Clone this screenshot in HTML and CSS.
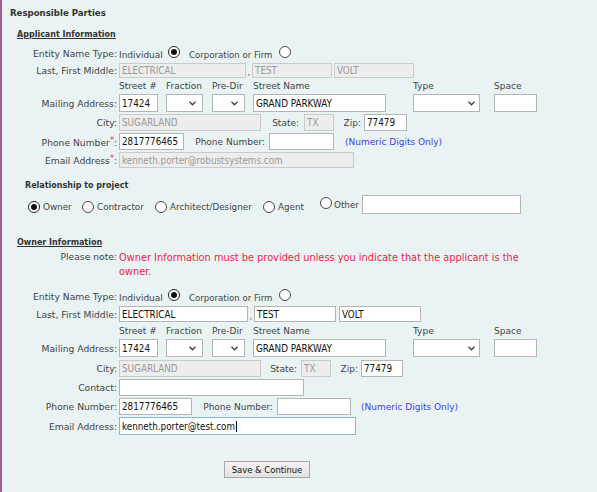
FILE: index.html
```html
<!DOCTYPE html>
<html lang="en">
<head>
<meta charset="utf-8">
<title>Responsible Parties</title>
<link rel="stylesheet" href="styles.css">
</head>
<body>
<div class="page">
  <div class="title">Responsible Parties</div>

  <div class="heading h-app">Applicant Information</div>

  <div class="row r-entity">
    <span class="lbl">Entity Name Type:</span>
    <span class="opt opt-ind">Individual</span><span class="radio on ent-r"></span>
    <span class="opt opt-corp">Corporation or Firm</span><span class="radio ent-r"></span>
  </div>

  <div class="row r-name-a">
    <span class="lbl">Last, First Middle:</span>
    <input class="inp w-last-a" disabled value="ELECTRICAL"><span class="comma">,</span><input class="inp w-first-a" disabled value="TEST"><input class="inp w-mid-a" disabled value="VOLT">
  </div>

  <div class="row r-sub">
    <span class="lbl"></span>
    <span class="col c-num">Street #</span>
    <span class="col c-frac">Fraction</span>
    <span class="col c-pre">Pre-Dir</span>
    <span class="col c-street">Street Name</span>
    <span class="col c-type">Type</span>
    <span class="col c-space">Space</span>
  </div>

  <div class="row r-mail">
    <span class="lbl">Mailing Address:</span>
    <input class="inp c-num" value="17424">
    <span class="sel c-frac"><svg class="chev" width="7" height="5" viewBox="0 0 7 5"><polyline points="0.5,0.8 3.5,3.8 6.5,0.8" fill="none" stroke="#444" stroke-width="1.4"/></svg></span>
    <span class="sel c-pre"><svg class="chev" width="7" height="5" viewBox="0 0 7 5"><polyline points="0.5,0.8 3.5,3.8 6.5,0.8" fill="none" stroke="#444" stroke-width="1.4"/></svg></span>
    <input class="inp c-street" value="GRAND PARKWAY">
    <span class="sel c-type sel-type"><svg class="chev" width="7" height="5" viewBox="0 0 7 5"><polyline points="0.5,0.8 3.5,3.8 6.5,0.8" fill="none" stroke="#444" stroke-width="1.4"/></svg></span>
    <input class="inp c-space" value="">
  </div>

  <div class="row r-city-a">
    <span class="lbl">City:</span>
    <input class="inp w-city" disabled value="SUGARLAND">
    <span class="inl state-a">State:</span>
    <input class="inp w-state" disabled value="TX">
    <span class="inl zip-a">Zip:</span>
    <input class="inp w-zip-a" value="77479">
  </div>

  <div class="row r-phone-a">
    <span class="lbl">Phone Number<span class="req">*</span>:</span>
    <input class="inp w-ph-a" value="2817776465">
    <span class="inl ph-lbl">Phone Number:</span>
    <input class="inp w-ph-a" value="">
    <span class="hint hint-a">(Numeric Digits Only)</span>
  </div>

  <div class="row r-email-a">
    <span class="lbl">Email Address<span class="req">*</span>:</span>
    <input class="inp w-email-a" disabled value="kenneth.porter@robustsystems.com">
  </div>

  <div class="heading h-rel">Relationship to project</div>

  <div class="row r-rel">
    <span class="rel-opt g-owner"><span class="radio on"></span><span class="rel-t">Owner</span></span>
    <span class="rel-opt g-contr"><span class="radio"></span><span class="rel-t">Contractor</span></span>
    <span class="rel-opt g-arch"><span class="radio"></span><span class="rel-t">Architect/Designer</span></span>
    <span class="rel-opt g-agent"><span class="radio"></span><span class="rel-t">Agent</span></span>
    <span class="rel-opt g-other"><span class="radio other-r"></span><span class="rel-t other-t">Other</span></span>
    <input class="inp w-other" value="">
  </div>

  <div class="heading h-own">Owner Information</div>

  <div class="row r-note">
    <span class="lbl">Please note:</span>
    <span class="note">Owner Information must be provided unless you indicate that the applicant is the owner.</span>
  </div>

  <div class="row r-entity-o">
    <span class="lbl">Entity Name Type:</span>
    <span class="opt opt-ind">Individual</span><span class="radio on ent-r"></span>
    <span class="opt opt-corp">Corporation or Firm</span><span class="radio ent-r"></span>
  </div>

  <div class="row r-name-o">
    <span class="lbl">Last, First Middle:</span>
    <input class="inp w-last-o" value="ELECTRICAL"><span class="comma">,</span><input class="inp w-first-o" value="TEST"><input class="inp w-mid-o" value="VOLT">
  </div>

  <div class="row r-sub r-sub-o">
    <span class="lbl"></span>
    <span class="col c-num">Street #</span>
    <span class="col c-frac">Fraction</span>
    <span class="col c-pre">Pre-Dir</span>
    <span class="col c-street">Street Name</span>
    <span class="col c-type">Type</span>
    <span class="col c-space">Space</span>
  </div>

  <div class="row r-mail">
    <span class="lbl">Mailing Address:</span>
    <input class="inp c-num" value="17424">
    <span class="sel c-frac"><svg class="chev" width="7" height="5" viewBox="0 0 7 5"><polyline points="0.5,0.8 3.5,3.8 6.5,0.8" fill="none" stroke="#444" stroke-width="1.4"/></svg></span>
    <span class="sel c-pre"><svg class="chev" width="7" height="5" viewBox="0 0 7 5"><polyline points="0.5,0.8 3.5,3.8 6.5,0.8" fill="none" stroke="#444" stroke-width="1.4"/></svg></span>
    <input class="inp c-street" value="GRAND PARKWAY">
    <span class="sel c-type sel-type"><svg class="chev" width="7" height="5" viewBox="0 0 7 5"><polyline points="0.5,0.8 3.5,3.8 6.5,0.8" fill="none" stroke="#444" stroke-width="1.4"/></svg></span>
    <input class="inp c-space" value="">
  </div>

  <div class="row r-city-o">
    <span class="lbl">City:</span>
    <input class="inp w-city" disabled value="SUGARLAND">
    <span class="inl state-o">State:</span>
    <input class="inp w-state" disabled value="TX">
    <span class="inl zip-o">Zip:</span>
    <input class="inp w-zip-o" value="77479">
  </div>

  <div class="row r-contact">
    <span class="lbl">Contact:</span>
    <input class="inp w-contact" value="">
  </div>

  <div class="row r-phone-o">
    <span class="lbl">Phone Number:</span>
    <input class="inp w-ph-o" value="2817776465">
    <span class="inl ph-lbl">Phone Number:</span>
    <input class="inp w-ph-o2" value="">
    <span class="hint hint-o">(Numeric Digits Only)</span>
  </div>

  <div class="row r-email-o">
    <span class="lbl">Email Address:</span>
    <span class="inp w-email-o focus">kenneth.porter@test.com<span class="caret"></span></span>
  </div>

  <div class="actions">
    <button class="btn" type="button">Save &amp; Continue</button>
  </div>
</div>
</body>
</html>
```

FILE: styles.css
```css
* { box-sizing: border-box; }
html, body { margin: 0; padding: 0; }
body {
  background: #e9f3f4;
  font-family: "DejaVu Sans", Verdana, sans-serif;
  font-size: 9px;
  color: #444;
}
.page {
  border-left: 2px solid #9d5f95;
  min-height: 492px;
  padding-top: 7px;
}
.title {
  font-weight: bold;
  font-size: 8.6px;
  line-height: 12px;
  color: #333;
  padding-left: 8px;
}
.heading {
  font-weight: bold;
  font-size: 8px;
  line-height: 12px;
  color: #333;
  padding-left: 15px;
  text-decoration: underline;
}
.h-app { margin-top: 10px; }
.h-rel { margin-top: 12px; padding-left: 23px; text-decoration: none; }
.h-own { margin-top: 23px; }

.row { display: flex; align-items: center; white-space: nowrap; }
.lbl {
  flex: none;
  width: 115px;
  margin-right: 2px;
  text-align: right;
  color: #444;
  font-size: 9.2px;
}
.req { color: #f02040; font-size: 8px; vertical-align: 3px; }

/* inputs */
.inp {
  flex: none;
  height: 100%;
  margin: 0;
  padding: 0 2px;
  border: 1px solid #b4b4b4;
  border-radius: 0;
  background: #fff;
  color: #111;
  font-family: "DejaVu Sans Condensed", "DejaVu Sans", sans-serif;
  font-stretch: condensed;
  font-size: 9.8px;
  outline: none;
}
.inp:disabled {
  background: #ededed;
  border-color: #cacaca;
  color: #9a9a9a;
  -webkit-text-fill-color: #9a9a9a;
  opacity: 1;
}
.inp.focus {
  border-color: #86b6e8;
  display: flex;
  align-items: center;
}
.caret {
  display: inline-block;
  width: 1px;
  height: 11px;
  margin-left: 1px;
  background: #111;
}

.sel {
  flex: none;
  height: 100%;
  background: #fff;
  border: 1px solid #b4b4b4;
  display: flex;
  align-items: center;
  justify-content: flex-end;
  padding-right: 6px;
}
.sel-type { padding-right: 4px; }
.chev { display: block; }

/* row heights */
.r-entity { margin-top: 4px; height: 16px; }
.r-name-a { margin-top: 2px; height: 15px; }
.r-sub { margin-top: 2px; height: 12px; }
.r-mail { margin-top: 2px; height: 18px; }
.r-city-a { margin-top: 2px; height: 17px; }
.r-phone-a { margin-top: 2px; height: 17px; }
.r-email-a { margin-top: 2px; height: 16px; }
.r-rel { margin-top: 3px; height: 19px; padding-left: 26px; }
.r-note { margin-top: 2px; align-items: flex-start; }
.r-entity-o { margin-top: 9px; height: 16px; }
.r-name-o { margin-top: 2px; height: 16px; }
.r-sub-o { margin-top: 3px; }
.r-city-o { margin-top: 3px; height: 17px; }
.r-contact { margin-top: 2px; height: 17px; }
.r-phone-o { margin-top: 2px; height: 17px; }
.r-email-o { margin-top: 2px; height: 18px; }

/* entity radios */
.opt { flex: none; color: #444; margin-top: 3px; }
.opt-ind { width: 49px; }
.opt-corp { width: 90px; margin-left: 9px; font-size: 8.6px; }
.radio {
  flex: none;
  width: 12px;
  height: 12px;
  border: 1px solid #4a4a4a;
  border-radius: 50%;
  background: #fff;
  display: flex;
  align-items: center;
  justify-content: center;
}
.radio.on { border-color: #222; }
.radio.on::after {
  content: "";
  width: 6px;
  height: 6px;
  border-radius: 50%;
  background: #111;
}
.ent-r { margin-bottom: 2px; }

/* name fields */
.comma { flex: none; width: 6px; text-align: center; color: #666; align-self: flex-end; line-height: 12px; }
.w-last-a { width: 127px; }
.w-first-a { width: 80px; }
.w-mid-a { width: 80px; margin-left: 2px; }
.w-last-o { width: 129px; }
.w-first-o { width: 82px; }
.w-mid-o { width: 82px; margin-left: 3px; }

/* address columns */
.col { flex: none; }
.c-num { width: 39px; }
.c-frac { width: 37px; margin-left: 8px; }
.c-pre { width: 33px; margin-left: 9px; }
.c-street { width: 133px; margin-left: 8px; }
.c-type { width: 67px; margin-left: 27px; }
.c-space { width: 43px; margin-left: 14px; }

/* city row */
.inl { flex: none; text-align: right; color: #444; }
.w-city { width: 142px; }
.state-a { width: 43px; padding-right: 5px; }
.state-o { width: 40px; padding-right: 4px; }
.w-state { width: 30px; }
.zip-a { width: 30px; padding-right: 3px; }
.zip-o { width: 30px; padding-right: 3px; }
.w-zip-a { width: 43px; }
.w-zip-o { width: 42px; }

/* phone rows */
.ph-lbl { width: 85px; padding-right: 4px; }
.w-ph-a { width: 65px; }
.w-ph-o { width: 73px; }
.w-ph-o2 { width: 74px; }
.hint { flex: none; color: #3d3df0; }
.hint-a { margin-left: 11px; }
.hint-o { margin-left: 10px; }

.w-email-a { width: 235px; }
.w-email-o { width: 237px; }
.w-contact { width: 185px; }

/* relationship */
.rel-opt { flex: none; display: flex; align-items: center; margin-top: 4px; }
.rel-t { margin-left: 3px; color: #444; font-size: 8.8px; }
.g-owner { width: 54px; }
.g-contr { width: 73px; }
.g-arch { width: 108px; }
.g-agent { width: 57px; }
.g-other { width: 42px; margin-top: 0; }
.other-r { margin-bottom: 4px; }
.other-t { margin-left: 2px; }
.w-other { width: 159px; }

/* note */
.note {
  width: 420px;
  white-space: normal;
  color: #f3223f;
  font-size: 9.8px;
  line-height: 14px;
}
.r-note .lbl { line-height: 12px; }

/* button */
.actions { margin-top: 26px; padding-left: 222px; }
.btn {
  display: block;
  width: 86px;
  height: 17px;
  margin: 0;
  padding: 0;
  border: 1px solid #a8a8a8;
  border-radius: 0;
  background: linear-gradient(#f3f3f3, #e1e1e1);
  color: #111;
  font-family: "DejaVu Sans Condensed", "DejaVu Sans", sans-serif;
  font-stretch: condensed;
  font-size: 9.4px;
}
```
